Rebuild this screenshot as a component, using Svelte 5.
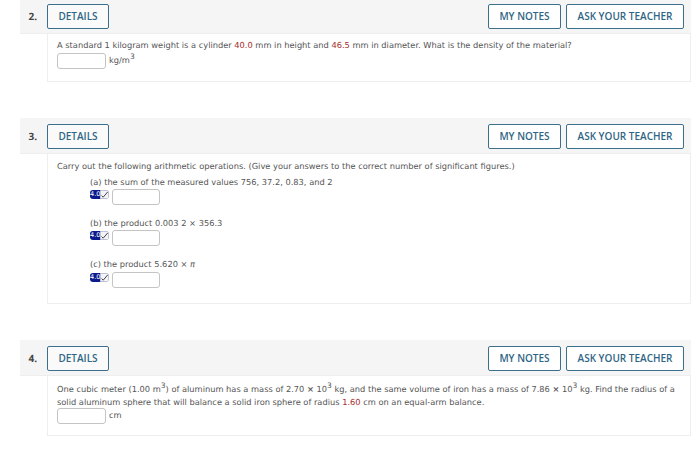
<script>
  const parts = [
    { label: '(a) the sum of the measured values 756, 37.2, 0.83, and 2' },
    { label: '(b) the product 0.003 2 × 356.3' },
    { label: '(c) the product 5.620 × ', pi: true }
  ];
</script>

{#snippet header(num)}
  <div class="head">
    <span class="num">{num}.</span>
    <button class="btn details">DETAILS</button>
    <span class="spacer"></span>
    <button class="btn notes">MY NOTES</button>
    <button class="btn ask">ASK YOUR TEACHER</button>
  </div>
{/snippet}

<div class="page">
  <section class="question">
    {@render header(2)}
    <div class="body q2">
      <p>A standard 1 kilogram weight is a cylinder <span class="red">40.0</span> mm in height and <span class="red">46.5</span> mm in diameter. What is the density of the material?</p>
      <div class="answer"><input type="text" /><span class="unit">kg/m<sup>3</sup></span></div>
    </div>
  </section>

  <section class="question">
    {@render header(3)}
    <div class="body q3">
      <p>Carry out the following arithmetic operations. (Give your answers to the correct number of significant figures.)</p>
      <div class="parts">
        {#each parts as part}
          <div class="part">
            <p>{part.label}{#if part.pi}<i>π</i>{/if}</p>
            <div class="row">
              <span class="badge">
                <span class="sf">4.0</span>
                <svg class="tick" width="9" height="9" viewBox="0 0 9 9"><path d="M1.5 5.5 L3.2 7.2 L7.8 1.8" fill="none" stroke="#444" stroke-width="1" /></svg>
              </span>
              <input type="text" />
            </div>
          </div>
        {/each}
      </div>
    </div>
  </section>

  <section class="question">
    {@render header(4)}
    <div class="body q4">
      <p>One cubic meter (1.00 m<sup>3</sup>) of aluminum has a mass of 2.70 <b>×</b> 10<sup>3</sup> kg, and the same volume of iron has a mass of 7.86 <b>×</b> 10<sup>3</sup> kg. Find the radius of a solid aluminum sphere that will balance a solid iron sphere of radius <span class="red">1.60</span> cm on an equal-arm balance.</p>
      <div class="answer"><input type="text" /><span class="unit">cm</span></div>
    </div>
  </section>
</div>

<style>
  :global(body) {
    background: #fff;
    overflow: hidden;
  }
  .page {
    width: 700px;
    height: 449px;
    overflow: hidden;
    font-family: "DejaVu Sans", sans-serif;
    font-size: 8.27px;
    color: #555;
    text-rendering: geometricPrecision;
  }
  .question {
    margin: 0 9px 36px 20px;
  }
  .question:first-child {
    margin-top: -2px;
  }
  .head {
    display: flex;
    align-items: center;
    gap: 5px;
    height: 36px;
    box-sizing: border-box;
    padding: 1px 7px 0 0;
    background: #f5f5f5;
    border-bottom: 1px solid #eee;
  }
  .num {
    width: 17px;
    margin-right: 5px;
    text-align: right;
    font-family: "Open Sans", sans-serif;
    font-weight: 700;
    font-size: 10px;
    color: #444;
  }
  .spacer {
    flex: 1;
  }
  .btn {
    height: 25px;
    padding: 0;
    background: #fff;
    border: 1.5px solid #3c6f8c;
    border-radius: 2px;
    font-family: "Open Sans", sans-serif;
    font-weight: 600;
    font-size: 10px;
    color: #2f6685;
  }
  .details {
    width: 62px;
    background: #fafafa;
  }
  .notes {
    width: 73px;
  }
  .ask {
    width: 118px;
  }
  .body {
    margin-left: 27px;
    padding: 0 9px;
    border: 1px solid #eee;
    border-top: none;
    box-sizing: border-box;
    line-height: 12.5px;
  }
  p {
    margin: 0;
  }
  .q2 {
    height: 48px;
    padding-top: 5px;
  }
  .q3 {
    height: 150px;
    padding-top: 6px;
  }
  .q4 {
    height: 60px;
    padding-top: 7px;
  }
  .q4 .answer {
    margin-top: 0;
  }
  .red {
    color: #a52a2a;
  }
  sup {
    font-size: 7.5px;
    line-height: 0;
  }
  input {
    width: 49px;
    height: 16px;
    padding: 0;
    box-sizing: border-box;
    background: #fff;
    border: 1px solid #c4c4c4;
    border-radius: 3px;
  }
  .answer {
    display: flex;
    align-items: flex-start;
    gap: 3px;
    margin-top: 1px;
  }
  .unit {
    line-height: 14px;
  }
  .parts {
    margin: 3.5px 0 0 33px;
    display: flex;
    flex-direction: column;
    gap: 12px;
  }
  .row {
    display: flex;
    align-items: flex-start;
    gap: 3px;
    margin-top: 1px;
  }
  .part:first-child .row {
    margin-top: 0;
  }
  .row input {
    width: 48px;
  }
  .badge {
    display: flex;
    width: 19px;
    height: 9px;
    margin-top: 1px;
    box-sizing: border-box;
    border-radius: 3px;
    overflow: hidden;
  }
  .sf {
    width: 10px;
    background: #0b1a8c;
    color: #fff;
    font-size: 6.5px;
    line-height: 9px;
    text-align: center;
  }
  .tick {
    background: #f4f4f8;
    border-radius: 0 3px 3px 0;
    box-shadow: inset 0 0 0 0.5px #8a8fb0;
  }
</style>
